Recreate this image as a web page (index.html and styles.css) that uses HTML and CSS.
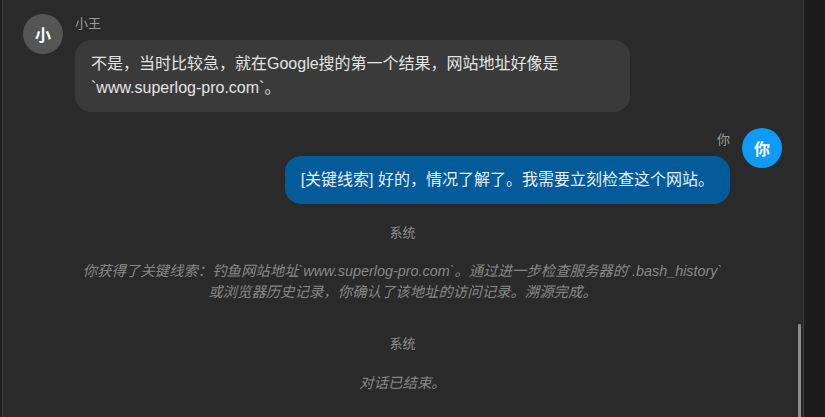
FILE: index.html
```html
<!DOCTYPE html>
<html lang="zh">
<head>
<meta charset="utf-8">
<title>对话</title>
<link rel="stylesheet" href="styles.css">
</head>
<body>
<div class="app">
  <main class="panel">
    <div class="messages">
      <div class="msg other">
        <div class="avatar avatar-gray">小</div>
        <div class="col">
          <div class="name">小王</div>
          <div class="bubble">不是，当时比较急，就在Google搜的第一个结果，网站地址好像是 `www.superlog-pro.com`。</div>
        </div>
      </div>
      <div class="msg user">
        <div class="avatar avatar-blue">你</div>
        <div class="col">
          <div class="name">你</div>
          <div class="bubble">[关键线索] 好的，情况了解了。我需要立刻检查这个网站。</div>
        </div>
      </div>
      <div class="system">
        <div class="sys-label">系统</div>
        <div class="sys-text">你获得了关键线索：钓鱼网站地址`www.superlog-pro.com`。通过进一步检查服务器的`.bash_history` 或浏览器历史记录，你确认了该地址的访问记录。溯源完成。</div>
      </div>
      <div class="system">
        <div class="sys-label">系统</div>
        <div class="sys-text">对话已结束。</div>
      </div>
    </div>
    <div class="scroll-thumb"></div>
  </main>
</div>
</body>
</html>
```
FILE: styles.css
```css
html, body {
  margin: 0;
  padding: 0;
  height: 100%;
  background: #1c1c1c;
  font-family: "Liberation Sans", "Noto Sans CJK SC", sans-serif;
  overflow: hidden;
}

.app {
  display: flex;
  height: 100%;
  padding-left: 2px;
}

.panel {
  position: relative;
  width: 800px;
  height: 100%;
  background: #2a2a2a;
  border-left: 1px solid #3c3c3c;
  border-right: 1px solid #3c3c3c;
  overflow: hidden;
}

.messages {
  display: flex;
  flex-direction: column;
  gap: 16px;
  padding: 14px 21px 0 20px;
}

.msg {
  display: flex;
  align-items: flex-start;
  gap: 12px;
}

.msg.user {
  flex-direction: row-reverse;
}

.avatar {
  flex: 0 0 40px;
  width: 40px;
  height: 40px;
  border-radius: 50%;
  display: flex;
  align-items: center;
  justify-content: center;
  color: #ffffff;
  font-weight: bold;
  font-size: 16px;
}

.avatar-gray {
  background: #555555;
}

.avatar-blue {
  background: #119af5;
}

.col {
  display: flex;
  flex-direction: column;
  min-width: 0;
}

.msg.user .col {
  align-items: flex-end;
}

.name {
  font-size: 13px;
  line-height: 20px;
  color: #9a9a9a;
  margin-bottom: 6px;
}

.msg.user .name {
  margin-top: 2px;
}

.bubble {
  max-width: 555px;
  box-sizing: border-box;
  padding: 12px 16px;
  border-radius: 16px;
  font-size: 16px;
  line-height: 24px;
  color: #e4e4e4;
  background: #3a3a3a;
}

.msg.user .bubble {
  background: #045b99;
  color: #e8eef4;
}

.system {
  display: flex;
  flex-direction: column;
  align-items: center;
  padding-top: 3px;
}

.sys-label {
  font-size: 13px;
  line-height: 20px;
  color: #909090;
  margin-bottom: 6px;
}

.sys-text {
  box-sizing: border-box;
  max-width: 684px;
  padding: 12px 16px;
  font-size: 14.4px;
  line-height: 21px;
  font-style: italic;
  color: #888888;
  text-align: center;
}

.system + .system .sys-text {
  padding-top: 13px;
}

.scroll-thumb {
  position: absolute;
  right: 2px;
  top: 324px;
  width: 3px;
  height: 200px;
  background: #8c8c8c;
  border-radius: 1px;
}
```
